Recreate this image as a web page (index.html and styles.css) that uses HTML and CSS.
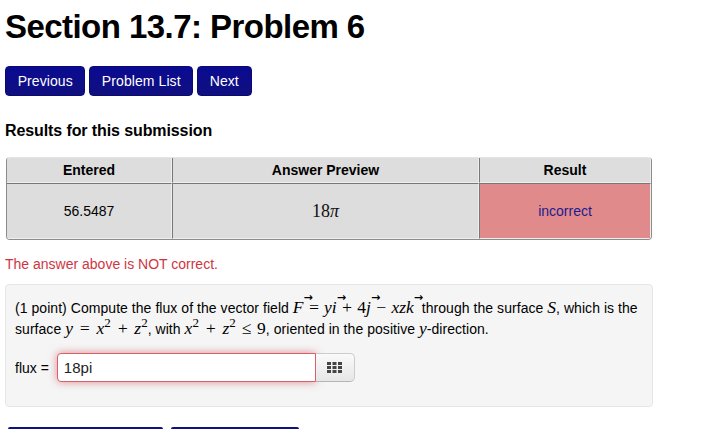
FILE: index.html
```html
<!DOCTYPE html>
<html lang="en">
<head>
    <meta charset="UTF-8">
    <title>Section 13.7: Problem 6</title>
    <link rel="stylesheet" href="styles.css">
</head>
<body>
    <div id="app">
        <h1>Section 13.7: Problem 6</h1>

        <div class="nav-buttons">
            <a class="nav-button" href="#">Previous</a>
            <a class="nav-button" href="#">Problem List</a>
            <a class="nav-button" href="#">Next</a>
        </div>

        <h3 class="results-title">Results for this submission</h3>

        <div class="results-table">
            <div class="cell head first">Entered</div>
            <div class="cell head">Answer Preview</div>
            <div class="cell head">Result</div>
            <div class="cell body first">56.5487</div>
            <div class="cell body preview"><span class="num">18</span><i>π</i></div>
            <div class="cell body incorrect">incorrect</div>
        </div>

        <p class="message">The answer above is NOT correct.</p>

        <div class="problem">
            <p class="statement">(1 point) Compute the flux of the vector field <span class="math field"><span class="vec">F</span> = y<span class="vec">i</span> + <span class="num">4</span><span class="vec">j</span> − xz<span class="vec">k</span></span> through the surface <span class="math">S</span>, which is the<br>surface <span class="math spaced">y = x<sup>2</sup> + z<sup>2</sup></span>, with <span class="math spaced">x<sup>2</sup> + z<sup>2</sup> ≤ <span class="num">9</span></span>, oriented in the positive <span class="math">y</span>-direction.</p>

            <div class="answer-row">
                <label for="flux">flux =</label>
                <input type="text" id="flux" value="18pi">
                <button class="grid-button" aria-label="Equation editor">
                    <svg width="15" height="11" viewBox="0 0 15 11">
                        <path fill="#444" d="M0 0h4v3H0zM5.500 0h4v3h-4zM11 0h4v3h-4zM0 4h4v3H0zM5.500 4h4v3h-4zM11 4h4v3h-4zM0 8h4v3H0zM5.500 8h4v3h-4zM11 8h4v3h-4z"/>
                    </svg>
                </button>
            </div>
        </div>

        <div class="bottom-buttons">
            <span class="submit wide"></span>
            <span class="submit"></span>
        </div>
    </div>
</body>
</html>
```

FILE: styles.css
```css
body {
    font-family: "Liberation Sans", Arial, sans-serif;
    font-size: 14px;
    color: #000;
    background-color: #fff;
    margin: 0;
}

#app {
    width: 648px;
    padding-left: 5px;
}

h1 {
    font-size: 33px;
    line-height: 40px;
    font-weight: bold;
    margin: 0;
    padding-top: 7px;
    letter-spacing: -0.55px;
}

.nav-buttons {
    display: flex;
    gap: 3.7px;
    margin-top: 19px;
}

.nav-button {
    display: block;
    height: 30px;
    line-height: 29px;
    padding: 0 11.7px;
    box-sizing: border-box;
    color: #fff;
    text-decoration: none;
    letter-spacing: 0.08px;
    background: linear-gradient(#0a0a92, #10107f);
    border: 1px solid #0a0a70;
    border-radius: 4px;
}

.results-title {
    font-size: 16px;
    line-height: 20px;
    font-weight: bold;
    letter-spacing: -0.1px;
    margin: 25px 0 0;
}

.results-table {
    display: grid;
    grid-template-columns: 165px 307px 172px;
    grid-template-rows: 25px 56px;
    width: 646px;
    box-sizing: border-box;
    margin: 16px 0 0 1px;
    border: 1px solid #8c8c8c;
    border-top-color: #e4e4e4;
    border-radius: 4px;
    overflow: hidden;
}

.cell {
    display: flex;
    align-items: center;
    justify-content: center;
    box-sizing: border-box;
    background-color: #ddd;
    border-left: 1px solid #777;
    border-right: 1px solid #eee;
    border-bottom: 1px solid #eee;
}

.cell.first {
    border-left: none;
}

.cell.body {
    border-top: 1px solid #777;
}

.head {
    font-weight: bold;
}

.preview {
    font-family: "Liberation Serif", "Times New Roman", serif;
    font-size: 18px;
    color: #111;
}

.incorrect {
    background-color: #e08a8c;
    color: #1c1c8c;
}

.message {
    color: #d0353f;
    line-height: 20px;
    margin: 14px 0 0;
}

.problem {
    height: 123px;
    box-sizing: border-box;
    margin-top: 10px;
    padding: 13px 9px 0;
    background-color: #f5f5f5;
    border: 1px solid #e6e6e6;
    border-radius: 4px;
}

.statement {
    margin: 0;
    line-height: 21px;
    letter-spacing: 0.05px;
}

.math {
    font-family: "Liberation Serif", "Times New Roman", serif;
    font-size: 17.5px;
    font-style: italic;
    line-height: 0;
    letter-spacing: 0;
}

.math.field {
    margin-right: 4px;
}

.math.spaced {
    word-spacing: 1.5px;
}

.math sup {
    font-size: 13px;
    font-style: normal;
    line-height: 0;
}

.num {
    font-style: normal;
}

.vec {
    position: relative;
}

.vec::before {
    content: "→";
    position: absolute;
    top: -4px;
    left: 100%;
    font-family: "DejaVu Sans", sans-serif;
    font-size: 11px;
    font-style: normal;
    font-weight: bold;
    line-height: 10px;
}

.answer-row {
    display: flex;
    align-items: center;
    margin-top: 13px;
}

.answer-row label {
    margin-right: 8px;
}

.answer-row input {
    width: 259px;
    height: 29px;
    box-sizing: border-box;
    padding: 0 6px;
    font-family: inherit;
    font-size: 15px;
    color: #222;
    border: 1px solid #d9606a;
    border-radius: 4px 0 0 4px;
    outline: none;
    box-shadow: 0 0 8px rgba(205, 70, 80, 0.6);
}

.grid-button {
    width: 39px;
    height: 29px;
    padding: 0;
    display: flex;
    align-items: center;
    justify-content: center;
    background: linear-gradient(#fafafa, #e6e6e6);
    border: 1px solid #ccc;
    border-bottom-color: #b5b5b5;
    border-left: none;
    border-radius: 0 5px 5px 0;
}

.bottom-buttons {
    display: flex;
    gap: 8px;
    margin: 20px 0 0 3px;
}

.submit {
    display: block;
    width: 128px;
    height: 2px;
    background-color: #10107f;
    border-radius: 4px 4px 0 0;
}

.submit.wide {
    width: 155px;
}
```
